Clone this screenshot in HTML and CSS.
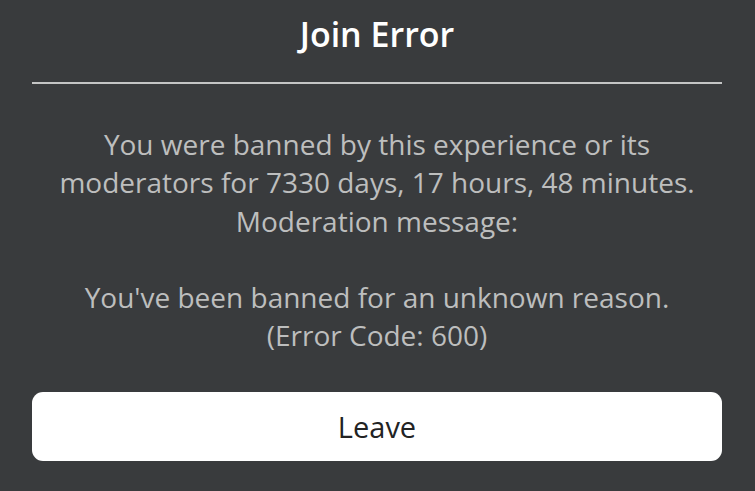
FILE: index.html
```html
<!DOCTYPE html>
<html>
<head>
<meta charset="utf-8">
<link rel="stylesheet" href="styles.css">
</head>
<body>
<div class="dialog">
  <h1 class="title">Join Error</h1>
  <div class="divider"></div>
  <div class="message">
    <p>You were banned by this experience or its<br>moderators for 7330 days, 17 hours, 48 minutes.<br>Moderation message:</p>
    <p>You've been banned for an unknown reason.<br>(Error Code: 600)</p>
  </div>
  <button class="leave">Leave</button>
</div>
</body>
</html>
```
FILE: styles.css
```css
html, body {
  margin: 0;
  padding: 0;
  background: #393b3d;
}
body {
  width: 755px;
  height: 491px;
  overflow: hidden;
  font-family: "Open Sans", "Noto Sans", sans-serif;
}
.dialog {
  display: flex;
  flex-direction: column;
  padding: 0 33px 0 32px;
}
.title {
  margin: 0;
  box-sizing: border-box;
  height: 82px;
  padding-top: 17px;
  line-height: 34px;
  text-align: center;
  font-size: 34px;
  font-weight: 600;
  color: #ffffff;
}
.divider {
  height: 2px;
  background: #c4c5c5;
}
.message {
  padding-top: 41px;
  color: #bdbebe;
  font-size: 28px;
  line-height: 38.3px;
  text-align: center;
}
.message p {
  margin: 0 0 38.3px;
}
.message p:last-child {
  margin-bottom: 0;
}
.leave {
  margin-top: 37px;
  height: 69px;
  border: none;
  border-radius: 11px;
  background: #ffffff;
  color: #222324;
  font-family: inherit;
  font-size: 29px;
}
```
